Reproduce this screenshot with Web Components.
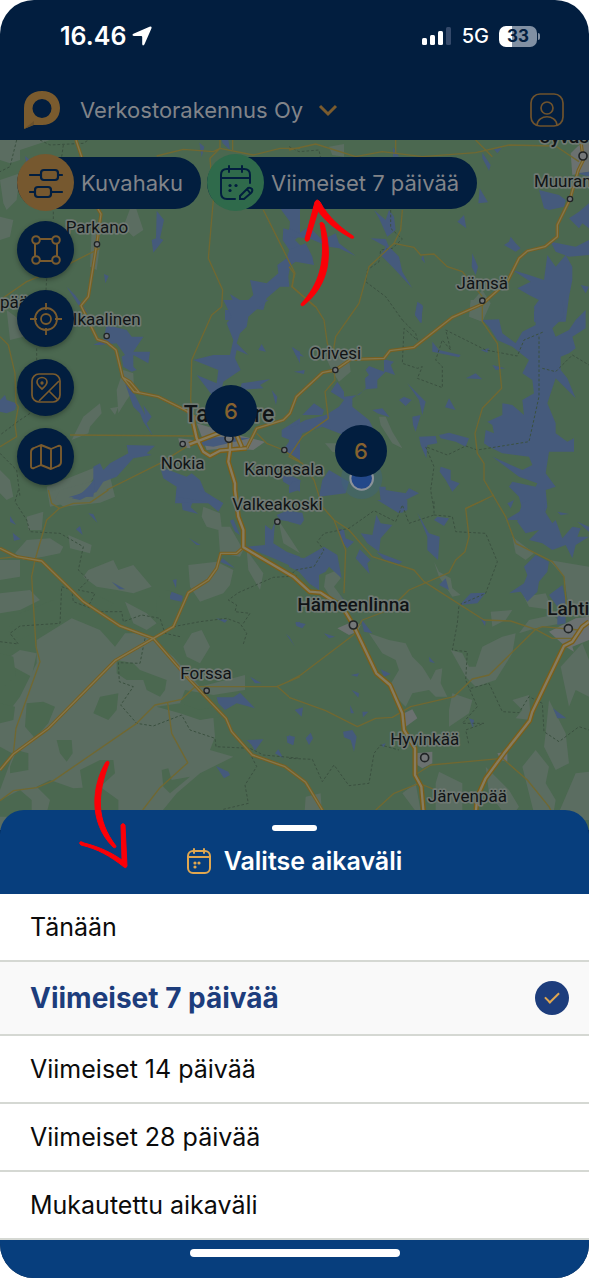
<!DOCTYPE html>
<html lang="fi">
<head>
<meta charset="utf-8">
<meta name="viewport" content="width=device-width, initial-scale=1">
<title>Kuvahaku</title>
<style>
    html, body {
        margin: 0;
        background: #fff;
    }

    body {
        font-family: Inter, "Noto Sans", sans-serif;
        --navy: #021e3f;
        --blue: #073e7d;
        --gold: #e0a750;
        --gold-dim: #7a5b2e;
        --grey-text: #818489;
    }
</style>
</head>
<body>

<app-screen>
    <status-bar slot="top" time="16.46" network="5G" battery="33"></status-bar>
    <app-header slot="top">Verkostorakennus Oy</app-header>

    <map-view slot="map">
        <filter-chip slot="chips" icon="sliders" style="--chip-color: #76582f">Kuvahaku</filter-chip>
        <filter-chip slot="chips" icon="calendar-edit" style="--chip-color: #2f6a4b">Viimeiset 7 päivää</filter-chip>

        <round-button slot="tools" icon="area" label="Rajaa alue"></round-button>
        <round-button slot="tools" icon="target" label="Oma sijainti"></round-button>
        <round-button slot="tools" icon="place" label="Kohteet"></round-button>
        <round-button slot="tools" icon="map" label="Karttataso"></round-button>

        <map-pin slot="pins" style="left: 205px; top: 245px">6</map-pin>
        <map-pin slot="pins" style="left: 335px; top: 285px">6</map-pin>
    </map-view>

    <range-sheet slot="sheet" heading="Valitse aikaväli">
        <range-option>Tänään</range-option>
        <range-option selected>Viimeiset 7 päivää</range-option>
        <range-option>Viimeiset 14 päivää</range-option>
        <range-option>Viimeiset 28 päivää</range-option>
        <range-option>Mukautettu aikaväli</range-option>
    </range-sheet>

    <hint-arrows slot="overlay"></hint-arrows>
</app-screen>

<script>
const ICONS = {
    'location': `<svg width="20" height="20" viewBox="0 0 20 20"><path d="M17.500 0.800Q20.400 -.2 19.400 2.600L12.400 18.600Q11 20.400 10.200 18.200V11Q10.200 10 9.200 10H1.800Q-.8 9.200 1.400 7.800Z" fill="#fff"/></svg>`,
    'signal': `<svg width="30" height="20" viewBox="0 0 30 20" fill="#fff"><rect x="0" y="12" width="5" height="7" rx="1.500"/><rect x="8" y="9" width="5" height="10" rx="1.500"/><rect x="16" y="5" width="5" height="14" rx="1.500"/><rect x="24" y="1" width="5" height="18" rx="1.500" fill="#34496a"/></svg>`,
    'logo': `<svg width="38" height="40" viewBox="0 0 38 40"><path fill="#7a5b2e" fill-rule="evenodd" d="M19 1C30 1 37 8 37 18S30 35 19 35H10L1 39V18C1 8 8 1 19 1ZM19 9A9.500 9.500 0 1 0 19 28A9.500 9.500 0 1 0 19 9Z"/><path d="M1 39L11 31V35Z" fill="#69502b"/></svg>`,
    'chevron': `<svg width="20" height="14" viewBox="0 0 20 14" fill="none" stroke="#7a5b2e" stroke-width="3"><path d="M2 3L10 11L18 3"/></svg>`,
    'profile': `<svg width="34" height="34" viewBox="0 0 34 34" fill="none" stroke="#6f532d" stroke-width="1.700"><rect x="1" y="1" width="32" height="32" rx="9"/><circle cx="17" cy="15" r="6"/><path d="M7 32C8 21 26 21 27 32"/></svg>`,
    'sliders': `<svg width="34" height="30" viewBox="0 0 34 30" fill="none" stroke="#021e3f" stroke-width="2.200" stroke-linecap="round"><path d="M1 7H12M29 7H33M1 24H5M22 24H33"/><rect x="12" y="2" width="17" height="10" rx="3"/><rect x="6" y="19" width="16" height="10" rx="3"/></svg>`,
    'calendar-edit': `<svg width="34" height="36" viewBox="0 0 34 36" fill="none" stroke="#021e3f" stroke-width="2" stroke-linecap="round"><path d="M16 34H8Q2 34 2 28V10Q2 4 8 4H25Q31 4 31 10V18M2 13H31M10 1V7M23 1V7"/><path d="M22 30L29 23Q31 22 33 24Q34 26 32 28L25 34H21V31ZM28 24L31 28"/><g fill="#021e3f" stroke="none"><circle cx="11" cy="20.500" r="1.600"/><circle cx="17" cy="20.500" r="1.600"/><circle cx="11" cy="25.500" r="1.600"/></g></svg>`,
    'area': `<svg width="30" height="30" viewBox="0 0 30 30" fill="none" stroke="#7a5b2e" stroke-width="2"><circle cx="5" cy="5" r="3.800"/><circle cx="25" cy="5" r="3.800"/><circle cx="5" cy="25" r="3.800"/><circle cx="25" cy="25" r="3.800"/><path d="M9 4H21M9 26H21M4 9V21M26 9V21"/></svg>`,
    'target': `<svg width="32" height="32" viewBox="0 0 32 32" fill="none" stroke="#7a5b2e" stroke-width="1.800"><circle cx="16" cy="16" r="11"/><circle cx="16" cy="16" r="5"/><path d="M16 0V7M16 25V32M0 16H7M25 16H32"/></svg>`,
    'place': `<svg width="30" height="30" viewBox="0 0 30 30" fill="none" stroke="#7a5b2e" stroke-width="1.700"><rect x="1" y="1" width="28" height="28" rx="7"/><path d="M8 28L28 8M18 18L27 27M11 16Q6 12 6 9A5 4.500 0 0 1 16 9Q16 12 11 16Z"/><circle cx="11" cy="10" r=".8"/></svg>`,
    'map': `<svg width="32" height="28" viewBox="0 0 32 28" fill="none" stroke="#7a5b2e" stroke-width="1.900" stroke-linejoin="round"><path d="M11 2L4 5Q1 6 1 9V23Q1 26 4 25L11 22L21 26L28 23Q31 22 31 19V5Q31 2 28 3L21 6ZM11 2V22M21 6V26"/></svg>`,
    'calendar': `<svg width="24" height="26" viewBox="0 0 24 26" fill="none" stroke="#e0a750" stroke-width="2" stroke-linecap="round"><rect x="1" y="3" width="22" height="22" rx="5"/><path d="M1 9H23M7 1V5M17 1V5"/><g fill="#e0a750" stroke="none"><circle cx="8" cy="15" r="1.600"/><circle cx="12" cy="15" r="1.600"/><circle cx="8" cy="19" r="1.600"/></g></svg>`
};

class AppIcon extends HTMLElement {
    constructor() {
        super();
        this.attachShadow({ mode: 'open' });
    }

    connectedCallback() {
        this.shadowRoot.innerHTML = `
            <style>
                :host { display: inline-flex; flex: none; }
                svg { display: block; overflow: visible; }
            </style>
            ${ICONS[this.getAttribute('name')] || ''}
        `;
    }
}

class AppScreen extends HTMLElement {
    constructor() {
        super();
        this.attachShadow({ mode: 'open' }).innerHTML = `
            <style>
                :host {
                    display: flex;
                    flex-direction: column;
                    position: relative;
                    min-height: 100vh;
                    border-radius: 34px;
                    overflow: hidden;
                    background: var(--navy);
                }

                main {
                    flex: 1;
                    display: flex;
                    flex-direction: column;
                }
            </style>
            <slot name="top"></slot>
            <main>
                <slot name="map"></slot>
                <slot name="sheet"></slot>
            </main>
            <slot name="overlay"></slot>
        `;
    }
}

class StatusBar extends HTMLElement {
    constructor() {
        super();
        this.attachShadow({ mode: 'open' });
    }

    connectedCallback() {
        this.shadowRoot.innerHTML = `
            <style>
                :host {
                    display: flex;
                    align-items: center;
                    justify-content: space-between;
                    height: 72px;
                    padding: 0 52px 0 60px;
                    color: #fff;
                }

                .side { display: flex; align-items: center; }
                .left { gap: 6px; }
                .right { gap: 10px; }
                time { font-size: 25px; font-weight: 600; }
                .network { font-size: 20px; font-weight: 500; }

                .battery {
                    position: relative;
                    width: 38px;
                    height: 21px;
                    border-radius: 7px;
                    background: linear-gradient(90deg, #fff 33%, #8190a3 33%);
                    color: var(--navy);
                    font-size: 17px;
                    font-weight: 700;
                    line-height: 21px;
                    text-align: center;
                }

                .battery::after {
                    content: "";
                    position: absolute;
                    left: 39px;
                    top: 7px;
                    width: 2px;
                    height: 7px;
                    border-radius: 0 2px 2px 0;
                    background: #8190a3;
                }
            </style>
            <div class="side left">
                <time>${this.getAttribute('time')}</time>
                <app-icon name="location"></app-icon>
            </div>
            <div class="side right">
                <app-icon name="signal"></app-icon>
                <span class="network">${this.getAttribute('network')}</span>
                <span class="battery">${this.getAttribute('battery')}</span>
            </div>
        `;
    }
}

class AppHeader extends HTMLElement {
    constructor() {
        super();
        this.attachShadow({ mode: 'open' }).innerHTML = `
            <style>
                :host {
                    display: flex;
                    align-items: center;
                    height: 60px;
                    padding: 8px 25px 0 23px;
                    color: var(--grey-text);
                }

                button {
                    display: flex;
                    align-items: center;
                    padding: 0;
                    border: 0;
                    background: none;
                    color: inherit;
                    font: inherit;
                }

                .company {
                    gap: 15px;
                    margin: 0 auto 0 19px;
                    font-size: 22px;
                    font-weight: 400;
                }
            </style>
            <app-icon name="logo"></app-icon>
            <button class="company"><slot></slot><app-icon name="chevron"></app-icon></button>
            <button aria-label="Profiili"><app-icon name="profile"></app-icon></button>
        `;
    }
}

class FilterChip extends HTMLElement {
    constructor() {
        super();
        this.attachShadow({ mode: 'open' });
    }

    connectedCallback() {
        this.shadowRoot.innerHTML = `
            <style>
                :host { display: block; }

                button {
                    display: flex;
                    align-items: center;
                    height: 52px;
                    padding: 0 18px 0 0;
                    border: 0;
                    border-radius: 26px;
                    background: var(--navy);
                    color: var(--grey-text);
                    font: inherit;
                    font-size: 22px;
                    white-space: nowrap;
                }

                .badge {
                    display: grid;
                    place-items: center;
                    width: 57px;
                    height: 57px;
                    margin-right: 7px;
                    border-radius: 50%;
                    background: var(--chip-color);
                }
            </style>
            <button>
                <span class="badge"><app-icon name="${this.getAttribute('icon')}"></app-icon></span>
                <slot></slot>
            </button>
        `;
    }
}

class RoundButton extends HTMLElement {
    constructor() {
        super();
        this.attachShadow({ mode: 'open' });
    }

    connectedCallback() {
        this.shadowRoot.innerHTML = `
            <style>
                :host { display: block; }

                button {
                    display: grid;
                    place-items: center;
                    width: 57px;
                    height: 57px;
                    padding: 0;
                    border: 0;
                    border-radius: 50%;
                    background: var(--navy);
                    box-shadow: 0 2px 5px rgba(0, 0, 0, 0.3);
                }
            </style>
            <button aria-label="${this.getAttribute('label')}">
                <app-icon name="${this.getAttribute('icon')}"></app-icon>
            </button>
        `;
    }
}

class MapPin extends HTMLElement {
    constructor() {
        super();
        this.attachShadow({ mode: 'open' }).innerHTML = `
            <style>
                :host { display: block; position: absolute; }

                button {
                    width: 52px;
                    height: 52px;
                    padding: 0;
                    border: 0;
                    border-radius: 50%;
                    background: var(--navy);
                    color: #87632f;
                    font: inherit;
                    font-size: 22px;
                    font-weight: 500;
                }
            </style>
            <button><slot></slot></button>
        `;
    }
}

/* Map drawing, three units to a pixel. Each group is one tile. */
const FARMLAND = `
    <path d="M0 120L60 100L50 180L20 210L10 190ZM0 0H150L60 30V60L30 70L0 60ZM0 230L40 240L30 290L0 300ZM400 180L430 270L400 290L370 260ZM275 270H300L298 330L290 390L270 380Z"/>
    <g transform="translate(867 0)"><path d="M545 490L580 450L605 490L580 545L545 530ZM120 20L165 12L165 50L130 45Z"/></g>
    <g transform="translate(0 480)"><path d="M370 210L400 220L402 270L380 300L355 340L350 270ZM330 325L355 320L345 345ZM300 310L305 340L270 380L265 400L215 420L230 390L250 350ZM140 560L290 500L285 530L250 570L200 610L150 620ZM20 30L60 60L70 110L30 120Z"/></g>
    <g transform="translate(867 480)"><path d="M270 350H290L310 395L340 445L310 430L275 375ZM545 0H600L580 65L540 50ZM110 170L180 175L185 215L150 245L130 215ZM108 430L140 430L160 460L130 455Z"/></g>
    <g transform="translate(0 1050)">
        <path d="M215 385L300 420L345 470L375 430H430L520 500L600 590L735 555V600L640 615L555 600L540 640L640 680L645 740L630 780L700 800L600 850L530 910L440 1020H0V900L40 792L0 770V700L60 620L110 520V450Z"/>
        <path d="M30 500L60 480L110 490L95 560L40 530ZM265 240L340 210L355 240L400 225L455 290L400 310L350 300L290 290L250 260ZM80 80L130 65L125 120L85 120ZM80 150L150 145L190 170L180 190L130 200L70 210L45 190ZM0 210H60L60 260L0 270ZM0 310L90 300L120 330L60 360L0 370ZM180 0L330 -40L345 20L300 38L190 50L165 30ZM610 50L660 70L665 110L690 110L730 180L720 200L660 190L655 120L620 110L605 80ZM565 225L650 215L700 240L690 285L670 310L600 335L570 290ZM550 470L575 430L605 420L630 470L600 520L560 500ZM835 90L900 190L850 160ZM740 180L790 250L780 300L745 240ZM205 135L275 165L270 190L210 175ZM0 -60L30 -30L40 20L20 30L0 10ZM375 335L440 370L470 400L440 420L400 400Z"/>
    </g>
    <g transform="translate(867 1080)">
        <path d="M110 225L145 210L155 235L135 260L165 300L130 300L105 260ZM240 400L300 420L350 430L370 470L400 500L425 540L440 510L460 505L455 550L475 590L440 590L420 570L370 580L350 620L330 600L300 560L330 510L320 480L280 460ZM435 185L450 215L485 235L490 265L515 285L490 290L470 260L450 230ZM670 110L735 160L710 180L680 160ZM605 335L670 330L650 360L610 380ZM485 450L520 460L540 500L560 500L580 440L640 410L680 400L670 460L620 540L560 560L530 530ZM690 400L720 360L790 345L820 370L740 385ZM815 500L880 430L900 480V590L860 570L840 620ZM780 180L900 200V320L840 330L825 230ZM490 580L550 600L540 640L480 680V630ZM770 700L780 600L830 700L840 790L800 810L765 740ZM670 600L720 585L725 660L680 655L700 630ZM700 800L740 750L780 800L770 850L800 900L790 960H740ZM860 820L900 815V960H800ZM450 815L520 850V960H440V850ZM340 880L380 850L400 960L370 920ZM50 890L95 880L100 960H45ZM590 800L660 870L690 920L660 960L600 880ZM705 290L770 280L790 330L720 320Z"/>
    </g>`;

const FOREST = `
    <g transform="translate(0 1050)">
        <path d="M0 490L40 500L48 560L0 600ZM0 640L45 650L40 690L0 700ZM300 620L355 610L350 660L325 690L280 670ZM80 640L130 635L165 650L145 700L105 745L75 710ZM350 510L400 520L420 540L500 570L495 600L480 620L440 600L430 570L380 570L350 550ZM240 840L300 810L340 810L345 850L290 900L250 905ZM110 890L150 870L220 895L300 890L355 930V970H140L150 930ZM0 930L60 900L95 930V980H0ZM485 840L505 835L515 870L570 860L510 910L490 890ZM170 750L215 750L218 790L200 815L180 790ZM30 830L50 780L85 790V840L30 850ZM120 420L180 400L200 370L160 330L60 370L20 420L60 450ZM470 650L540 640L600 660L640 650L660 680L600 690L540 670Z"/>
        <path d="M470 330L500 300L560 320L520 410L470 400ZM300 320L340 340L320 365L280 350Z"/>
    </g>`;

const TOWNS = `
    <g transform="translate(867 0)"><path d="M865 20L890 0H900V95L850 105L845 40Z"/></g>
    <g transform="translate(0 480)"><path d="M535 415L580 420L570 445L540 440ZM590 370L690 400L795 425L760 450L690 445L620 450Z"/></g>
    <g transform="translate(867 1080)"><path d="M380 760L430 755V790L400 805L385 795ZM345 640L370 628L385 655L350 680ZM145 385L190 365L215 375L205 395L180 405ZM780 395L860 355L900 350V420L850 440L855 455L830 440ZM625 760L655 755L655 785L635 780Z"/></g>`;

const WATER = `
    <path d="M75 48L90 60L80 75ZM598 8L613 20L605 52ZM665 0H685L690 30L668 10ZM470 212L492 240L480 295L490 300L460 338L455 300L468 295ZM312 402L326 408L316 430ZM200 440L225 465L265 520L235 495ZM840 205H900V285L885 300L905 320L900 345L870 380L865 410L868 440L840 440L800 475L790 510L750 505L720 540H675V510L710 510L690 462L735 490L760 465L750 420L800 430L835 400L832 375L860 355L868 330L848 300L850 265L868 270L870 245Z"/>
    <g transform="translate(867 0)"><path d="M312 22L330 50H312ZM580 38L605 75L600 92L580 55ZM615 28L638 24L625 40ZM0 265L30 280L60 260L100 300L140 280L150 310L200 348L150 325L120 320L60 295L0 290ZM0 330L50 310L70 350L75 375L20 365L0 378ZM255 210L290 240L300 210L315 230L320 270L295 290L270 235ZM245 295L290 297L300 320L330 350L340 395L370 445L310 380L275 345L290 320ZM505 245L525 225L532 265ZM572 145L597 187L568 190ZM750 150L810 165L830 180L825 200L780 210L765 205ZM840 235L870 215L900 190V265L880 250L870 265ZM645 315L660 305L665 290L680 310L695 325L680 335ZM550 340L567 380L560 405L548 380ZM670 390L720 405L765 420L775 345L800 380L830 345L850 380V420L840 470L830 545H735V515L760 485L720 465L685 445L725 425ZM785 305L860 320L900 300V345L840 350L800 335ZM385 485L400 495L398 550L378 525ZM402 345L408 370L397 357ZM875 435L900 440L890 460ZM865 100L900 95V110Z"/></g>
    <g transform="translate(0 480)"><path d="M320 75L380 90L395 110L430 110L400 155H450L445 190L400 165V200L410 210L395 215L370 200L365 170L375 165L350 130L300 135H280L310 120ZM375 250L405 285L425 325L435 345L430 315L455 350L440 370L460 410L430 365L420 340L400 320ZM670 0H805L780 20L745 50L740 80L720 100L710 130L745 165L710 150L705 175L722 210L700 225L670 245L660 290H640L590 225L650 250L655 210L580 180L640 165L690 165L700 120L680 70L695 50ZM725 250L790 240L810 238L780 255L790 265L720 270ZM775 150L785 132L798 155ZM875 142L900 155V190ZM815 270L832 290L828 315ZM0 300L15 285L20 300L50 310L45 330L20 340L0 335ZM585 415L680 410L750 415L640 440L600 435ZM380 435L465 437L440 460L455 465L400 475L350 530L310 545L290 575L240 600L215 595L260 570L280 540V500L300 490L310 510L330 490L385 460ZM480 500L560 530L575 520L600 540L615 575L670 610H525L530 560L490 535ZM845 390L900 355V410L870 430L900 430V480L850 450L870 420L845 410ZM840 510L900 540V575L850 545Z"/></g>
    <g transform="translate(867 480)"><path d="M10 140L45 170L20 165ZM15 215L47 210L45 222ZM385 10L402 18L395 70L378 45ZM430 125L450 150L515 165L510 172L430 155ZM580 60L630 58L640 100L680 130L700 95L740 75L735 20L750 0H820L825 50L790 85L800 110L840 90L860 60L890 30V85L850 110L860 145L840 160L815 170V210L835 235L860 295L800 235L775 310L800 370V400L835 425L855 415V455L780 455L770 520L800 560L770 570L775 620L760 660H650L700 630L690 590L660 560L670 545L740 560L745 550L690 530L610 470L700 510L730 495L720 470L640 460L600 440L585 430L590 390L615 400L610 375L595 365L640 345V310L670 315L705 345L700 300L735 280L730 240L700 220L720 180L670 140L625 120L600 80ZM285 178L315 185L305 195L318 225L290 215L265 240V265L230 268L190 295V320L240 360L260 400L200 420L150 400L100 380L40 400L30 430L0 450V385L50 360L110 345L150 320L165 300L125 275L145 245L165 275V290L210 285L230 265L228 235L240 225L230 210L240 198L285 215ZM40 345L75 310L105 330L100 345ZM250 330L280 325L302 352L265 340ZM330 300L345 290L368 300L350 318ZM355 250L410 305L400 345L390 300ZM370 350L395 345L380 395L372 375ZM468 322L480 295L500 330ZM530 235L560 220L580 238ZM610 195L648 205L620 210ZM575 150L600 145L595 158ZM390 410L440 408L445 430L415 435L412 475L395 435ZM450 405L480 398L540 415L530 440L500 425L455 415ZM455 500L485 510V540L512 550L490 575L470 540L452 515ZM270 560H290V570L350 580L360 565L390 580L350 600L340 640L310 610L275 600ZM120 510L180 545L170 580L90 590L100 540ZM0 560L10 545L35 540L30 570L0 580Z"/></g>
    <g transform="translate(0 1050)"><path d="M205 22L245 10L285 -30L280 20ZM30 78L48 105L30 95ZM38 128L62 148L42 152ZM228 118L240 108L248 135ZM265 70L280 72L292 98ZM335 275L375 298H358ZM567 145L602 165H590ZM530 0H600L670 40L655 65L620 35L528 20ZM545 38L578 35L572 52L595 72L548 60ZM690 92L700 88L720 135L705 125ZM660 215L668 205L705 235ZM510 318L515 305L548 318L545 335L510 328ZM518 270L530 268L528 295ZM740 170L795 165V105L815 120L825 95L820 160L860 185L900 200V240L820 205L760 180ZM830 75L865 60L900 70V100L840 90ZM650 622H700L720 608L765 655L710 640L675 660L655 640ZM750 560L785 580H765ZM740 750L790 748L765 782L755 765ZM860 738L885 740L880 765L862 758ZM825 790L835 778L850 805ZM648 828L685 845L690 855L672 865ZM885 660L900 655V675ZM885 400L900 395V410ZM648 385L682 390L675 398ZM858 432L868 440L885 470Z"/></g>
    <g transform="translate(867 1080)"><path d="M0 35L40 38L45 60L35 75L0 65ZM265 0H355V30L330 40ZM0 165L45 175L105 140L145 165L158 235L120 200L110 215L90 225V270L60 250L30 215L0 200ZM145 85L165 90L170 115L195 125L175 145L160 125ZM215 100L250 105L262 45L275 70L310 75L275 115L270 155L235 130ZM200 175L212 148L245 180L235 190L242 222ZM262 155L340 185L330 192L285 178ZM385 38L420 100L452 110L447 180L415 150V110ZM435 60L445 50L480 55L465 78ZM655 10L675 0L665 25ZM690 40L700 10L720 0H770L765 30L790 70L800 60L820 115L850 80L875 85L865 110L900 110L860 135L850 175L830 135L790 150L760 130L720 120L750 90L710 100L685 65ZM705 200L740 165L780 185L775 215L750 245L745 275L715 305L695 275L660 280L705 250L715 225ZM780 285L820 255L830 300V370L805 375V320ZM450 255L470 235L480 270ZM512 315L545 280L590 278L565 310ZM150 280L165 300L200 360L175 320ZM215 355L250 400L225 395ZM570 348L590 365L588 378ZM20 365L50 372L40 385L22 378ZM105 400L138 410L120 415ZM275 508L305 522L285 530ZM420 470L438 490L422 485ZM185 525L210 520L205 530ZM188 570L210 580L208 593ZM18 630L42 622L38 650ZM183 615L195 640H185ZM220 635H238L222 652ZM0 705L15 712L12 735L0 730ZM50 715L65 698L72 715L60 735ZM162 695L190 690L203 710L195 755L185 720L165 712ZM275 735L290 730L285 742ZM792 625L832 655H805ZM540 655L555 660L552 685ZM805 35L840 42L815 45ZM865 65L900 80V95Z"/></g>`;

const BORDERS = `
    <path d="M120 0L150 15L250 10L265 0M50 0L30 80L0 95M160 215V240M190 15L185 50M140 415L138 450"/>
    <g transform="translate(867 0)"><path d="M0 20L30 35L90 30L95 55M305 210V265L340 297L310 325L275 330L270 365L235 390L230 425L290 470L340 540"/></g>
    <g transform="translate(0 480)"><path d="M110 145V180M90 340L60 360L0 405M0 460L50 510L60 590"/></g>
    <g transform="translate(867 480)"><path d="M340 60L380 100L385 120L345 85L340 190L385 205L400 200L385 235L460 263V200L440 180L460 120L485 150L470 90L590 150L685 168L705 120L765 95M750 110V290L720 425L565 450L530 438L475 465L410 440L435 500L425 570L435 630M760 205L800 215L850 165L900 195"/></g>
    <g transform="translate(0 1050)"><path d="M55 0L45 35L80 90L90 125L180 130L250 170L235 240L265 270L235 300L285 310L270 340L245 345M0 455L55 462L30 430L60 408L180 400L185 290L215 300L220 335L300 365H365L370 395L425 375L480 385L495 430L540 440M520 410L600 395L680 385L720 400L740 430L730 462M730 400L750 370L705 365L710 345L685 330L715 308L820 262L890 258M435 445L420 520L355 518L358 575L400 590L362 645L410 700L460 708L545 675L570 720L645 745L648 770L750 775L790 795L900 805M755 800L770 830L735 885L745 940L670 958"/></g>
    <g transform="translate(867 1080)"><path d="M0 230L20 210L75 200L105 150L85 125L105 100L180 85L255 32L320 65L340 15L360 70L435 45V0M435 45L490 50L500 95L590 100L625 185L590 280L510 315L505 370L490 450L535 455L530 540L565 620L520 670L585 670L530 690L540 735M545 565L600 550L640 635L690 638L720 590L760 610L765 695L810 725L870 680L900 690M0 775L70 778L100 845L135 795L180 857L240 850L255 760L275 735L330 750"/></g>`;

const SMALL_ROADS = `
    <path d="M470 48L550 28L640 35L660 25L760 45L840 25L900 25M660 0V25L630 55L640 180L625 355L668 450L665 500L635 525L575 660L572 780L580 830M698 0V30M790 210L830 290L885 400L875 440L945 500M0 480L80 425L140 400M210 370L300 325"/>
    <g transform="translate(867 0)"><path d="M0 30L80 12L200 50L280 35L400 50L560 38L660 15L800 18L870 65M320 0V40M340 210L335 270L315 310L375 322L395 345L435 342L475 380L520 395L580 470M560 0L610 50M315 310L240 380L210 490L140 590L130 650M0 380L15 400L10 440L80 500L105 540L115 610L130 650"/></g>
    <g transform="translate(0 480)"><path d="M210 405L585 408M0 110L25 135L45 220L48 310L55 320L45 375L50 410L0 440M320 570L480 490L560 440M770 400L800 430L850 450L900 485"/></g>
    <g transform="translate(867 480)"><path d="M580 15V65L625 130L638 265L580 325L558 400L565 460L585 490V540L650 650L680 730M615 585L532 625M135 210L138 240L108 275L118 355L40 410L0 470L40 490L75 540L100 620L135 660"/></g>
    <g transform="translate(0 1050)"><path d="M145 0L155 40L178 55L140 90L105 210L95 260L108 470L120 515L48 715L40 792M178 55L220 40L270 38L325 0M0 205L50 200M0 932L40 902L110 893L160 872L410 700L465 645L545 628L585 590H830L900 560M830 588L867 620M503 638L515 730L563 818L480 893L428 960"/></g>
    <g transform="translate(867 1080)"><path d="M0 543L35 525L193 405L220 360L300 330M0 592L110 632L205 680L260 655L310 652L365 620L495 590L550 537L600 525L740 388L760 380L870 390M135 60L180 90L250 170L375 210L405 245L585 360L665 363L740 388L790 415L850 415M135 60L170 150L165 280M300 330L360 270L480 218L500 180L528 155L540 110L530 25L585 0M680 130L790 185L825 230L835 350M378 825L425 795L640 775L715 840L780 920L800 960M260 930L315 880L390 850L440 870"/></g>`;

const MID_ROADS = `
    <path d="M228 0L248 60L290 200L303 222L292 300L265 470L243 497L292 598L320 607L348 630L368 712L402 755L475 770L555 810L580 825M368 712L390 725L420 760"/>
    <path d="M740 925L770 865L850 840L870 820L889 770L967 698L1006 690L1052 658L1152 655L1170 632L1242 622L1357 532L1447 492L1522 425L1557 355L1582 333L1635 320L1672 290V255L1710 178L1735 90L1750 60L1742 0"/>
    <path d="M0 1225L50 1250L125 1263L250 1385L360 1458L460 1495L520 1460L565 1358L625 1320L650 1285L662 1240L710 1240L730 1222M0 1890L40 1842L145 1765L345 1562L460 1495L560 1610L678 1735L695 1775L757 1845L855 1880L917 1927L967 2010L990 2070"/>`;

const MAIN_ROADS = `
    <path d="M580 825V850L590 895L610 935L630 948L660 932L740 925M568 913L660 878M710 885L725 920"/>
    <path d="M690 880V930L685 965L705 1030V1050L715 1130L730 1170V1222L880 1310L929 1355L962 1358L1027 1400L1060 1455L1129 1600L1170 1635L1207 1720L1212 1770L1245 1825V1905L1264 1940L1270 2010V2070"/>
    <path d="M1767 1445L1747 1460L1717 1505L1692 1518L1597 1715L1589 1742L1512 1840L1457 1915L1432 1970L1422 2070"/>`;

const TOWN_DOTS = [
    [291, 313], [320, 588], [548, 912], [853, 930], [1006, 690], [1447, 482],
    [1710, 177], [832, 1145], [620, 1652]
];

const CITY_DOTS = [[1749, 48], [687, 895], [1060, 1455], [1705, 1466], [1274, 1853]];

const LABELS = [
    ['Parkano', 291, 278, 'town'],
    ['Ikaalinen', 320, 555, 'town'],
    ['Orivesi', 1006, 658, 'town'],
    ['Jämsä', 1447, 448, 'town'],
    ['Muurame', 1710, 142, 'town'],
    ['Nokia', 548, 988, 'town'],
    ['Kangasala', 852, 1005, 'town'],
    ['Valkeakoski', 832, 1110, 'town'],
    ['Forssa', 618, 1618, 'town'],
    ['Hyvinkää', 1274, 1815, 'town'],
    ['Järvenpää', 1402, 1987, 'town'],
    ['pää', 42, 503, 'town'],
    ['Hämeenlinna', 1060, 1413, 'city'],
    ['Lahti', 1705, 1425, 'city'],
    ['Jyväskylä', 1745, 10, 'city'],
    ['Tampere', 687, 845, 'metro']
];

class MapView extends HTMLElement {
    constructor() {
        super();

        const dots = TOWN_DOTS.map(([x, y]) => `<circle cx="${x}" cy="${y}" r="8" stroke-width="4"/>`).join('')
            + CITY_DOTS.map(([x, y]) => `<circle cx="${x}" cy="${y}" r="12" stroke-width="5"/>`).join('');
        const labels = LABELS.map(([name, x, y, kind]) => `<text class="${kind}" x="${x}" y="${y}">${name}</text>`).join('');

        this.attachShadow({ mode: 'open' }).innerHTML = `
            <style>
                :host {
                    display: block;
                    position: relative;
                    flex: 1;
                    min-height: 560px;
                    padding: 14px 17px 0;
                    background: #4b6850;
                    overflow: hidden;
                }

                .canvas {
                    position: absolute;
                    inset: 0;
                    width: 100%;
                    height: 100%;
                }

                .farmland { fill: #5b6d61; }
                .forest { fill: #4b6850; }
                .towns { fill: #6b7170; }
                .water { fill: #455a7c; }
                .borders { stroke: #3b5140; stroke-width: 3; stroke-dasharray: 8 6; }
                .small { stroke: #716831; stroke-width: 4; }
                .mid { stroke: #786022; stroke-width: 10; }
                .mid-core { stroke: #85774c; stroke-width: 4; }
                .main { stroke: #7c5e18; stroke-width: 15; }
                .main-core { stroke: #857c60; stroke-width: 7; }
                .lines { fill: none; stroke-linejoin: round; }
                .dots { fill: #747779; stroke: #202426; }

                text {
                    font-family: Roboto, sans-serif;
                    fill: #111416;
                    stroke: #6f7973;
                    stroke-width: 10;
                    stroke-linejoin: round;
                    paint-order: stroke;
                    text-anchor: middle;
                }

                .town { font-size: 51px; }
                .city { font-size: 57px; font-weight: 500; }
                .metro { font-size: 69px; font-weight: 500; }

                .chips, .tools { position: relative; display: flex; }
                .chips { align-items: center; gap: 6px; height: 57px; }
                .tools { flex-direction: column; gap: 12px; width: 57px; margin-top: 10px; }
            </style>
            <svg class="canvas" viewBox="0 0 1767 2070" preserveAspectRatio="xMinYMin slice">
                <g class="farmland">${FARMLAND}</g>
                <g class="forest">${FOREST}</g>
                <g class="towns">${TOWNS}</g>
                <g class="water">${WATER}</g>
                <g class="lines borders">${BORDERS}</g>
                <g class="lines small">${SMALL_ROADS}</g>
                <g class="lines mid">${MID_ROADS}</g>
                <g class="lines mid-core">${MID_ROADS}</g>
                <g class="lines main">${MAIN_ROADS}</g>
                <g class="lines main-core">${MAIN_ROADS}</g>
                <g class="dots">${dots}</g>
                ${labels}
                <circle cx="1085" cy="1015" r="62" fill="#3f6475" opacity="0.5"/>
                <circle cx="1085" cy="1015" r="34" fill="#23488a" stroke="#8c9299" stroke-width="6"/>
            </svg>
            <slot name="pins"></slot>
            <div class="chips"><slot name="chips"></slot></div>
            <div class="tools"><slot name="tools"></slot></div>
        `;
    }
}

class RangeOption extends HTMLElement {
    constructor() {
        super();
        this.attachShadow({ mode: 'open' }).innerHTML = `
            <style>
                :host { display: block; }

                label {
                    box-sizing: border-box;
                    display: flex;
                    align-items: center;
                    justify-content: space-between;
                    height: 68px;
                    padding: 0 20px 0 30px;
                    border-bottom: 2px solid #d5d8d3;
                    background: #fff;
                    color: #0b0b0b;
                    font-size: 25px;
                }

                input {
                    appearance: none;
                    width: 34px;
                    height: 34px;
                    margin: 0;
                    border-radius: 50%;
                }

                :host([selected]) label {
                    height: 74px;
                    background: #f9f9f9;
                    color: #1d3d7c;
                    font-size: 28px;
                    font-weight: 700;
                }

                :host([selected]) input {
                    display: grid;
                    place-items: center;
                    background: #1d3d7c;
                }

                :host([selected]) input::before {
                    content: "";
                    width: 12px;
                    height: 6px;
                    margin-bottom: 4px;
                    border: solid var(--gold);
                    border-width: 0 0 2px 2px;
                    transform: rotate(-45deg);
                }
            </style>
            <label><slot></slot><input type="radio"></label>
        `;
    }

    connectedCallback() {
        const input = this.shadowRoot.querySelector('input');
        input.checked = this.hasAttribute('selected');
        input.addEventListener('change', () => {
            this.dispatchEvent(new CustomEvent('pick', { bubbles: true }));
        });
    }
}

class RangeSheet extends HTMLElement {
    constructor() {
        super();
        this.attachShadow({ mode: 'open' });
    }

    connectedCallback() {
        this.shadowRoot.innerHTML = `
            <style>
                :host {
                    display: block;
                    position: relative;
                    margin-top: -20px;
                    border-radius: 24px 24px 0 0;
                    background: var(--blue);
                    color: #fff;
                }

                header {
                    display: flex;
                    flex-direction: column;
                    align-items: center;
                    box-sizing: border-box;
                    height: 84px;
                    padding-top: 15px;
                    gap: 15px;
                }

                .handle {
                    width: 45px;
                    height: 6px;
                    border-radius: 3px;
                    background: #fff;
                }

                h2 {
                    display: flex;
                    align-items: center;
                    gap: 13px;
                    margin: 0;
                    font-size: 25px;
                    font-weight: 600;
                    line-height: 30px;
                }

                footer {
                    display: flex;
                    justify-content: center;
                    height: 29px;
                    padding-top: 9px;
                }

                .home {
                    width: 210px;
                    height: 8px;
                    border-radius: 4px;
                    background: #fff;
                }
            </style>
            <header>
                <div class="handle"></div>
                <h2><app-icon name="calendar"></app-icon>${this.getAttribute('heading')}</h2>
            </header>
            <slot></slot>
            <footer><div class="home"></div></footer>
        `;

        this.addEventListener('pick', (event) => {
            this.querySelectorAll('range-option').forEach((option) => {
                const picked = option === event.target;
                option.toggleAttribute('selected', picked);
                option.shadowRoot.querySelector('input').checked = picked;
            });
        });
    }
}

class HintArrows extends HTMLElement {
    constructor() {
        super();
        this.attachShadow({ mode: 'open' }).innerHTML = `
            <style>
                :host {
                    display: block;
                    position: absolute;
                    inset: 0;
                    pointer-events: none;
                }

                svg {
                    display: block;
                    width: 100%;
                    height: 100%;
                    fill: #fb0007;
                    stroke: #fb0007;
                    stroke-linejoin: round;
                }
            </style>
            <svg>
                <path d="M320 223Q322 221 324 224C333 256 329 285 304 305Q301 307 301 304C319 284 327 262 320 223Z"/>
                <path d="M315 202Q317 198 320 202C328 217 341 228 353 236Q355 239 351 238C338 231 327 223 318 211L309 240Q306 243 305 239Z"/>
                <path d="M106 762Q109 760 109 763C97 795 96 820 116 846Q116 849 113 847C88 822 92 785 106 762Z"/>
                <path d="M80 842Q81 841 84 843C100 847 112 853 122 860L121 825Q123 822 125 825L127 866Q126 869 124 867C110 856 98 849 81 845Q79 844 80 842Z"/>
            </svg>
        `;
    }
}

customElements.define('app-icon', AppIcon);
customElements.define('app-screen', AppScreen);
customElements.define('status-bar', StatusBar);
customElements.define('app-header', AppHeader);
customElements.define('filter-chip', FilterChip);
customElements.define('round-button', RoundButton);
customElements.define('map-pin', MapPin);
customElements.define('map-view', MapView);
customElements.define('range-option', RangeOption);
customElements.define('range-sheet', RangeSheet);
customElements.define('hint-arrows', HintArrows);
</script>
</body>
</html>
